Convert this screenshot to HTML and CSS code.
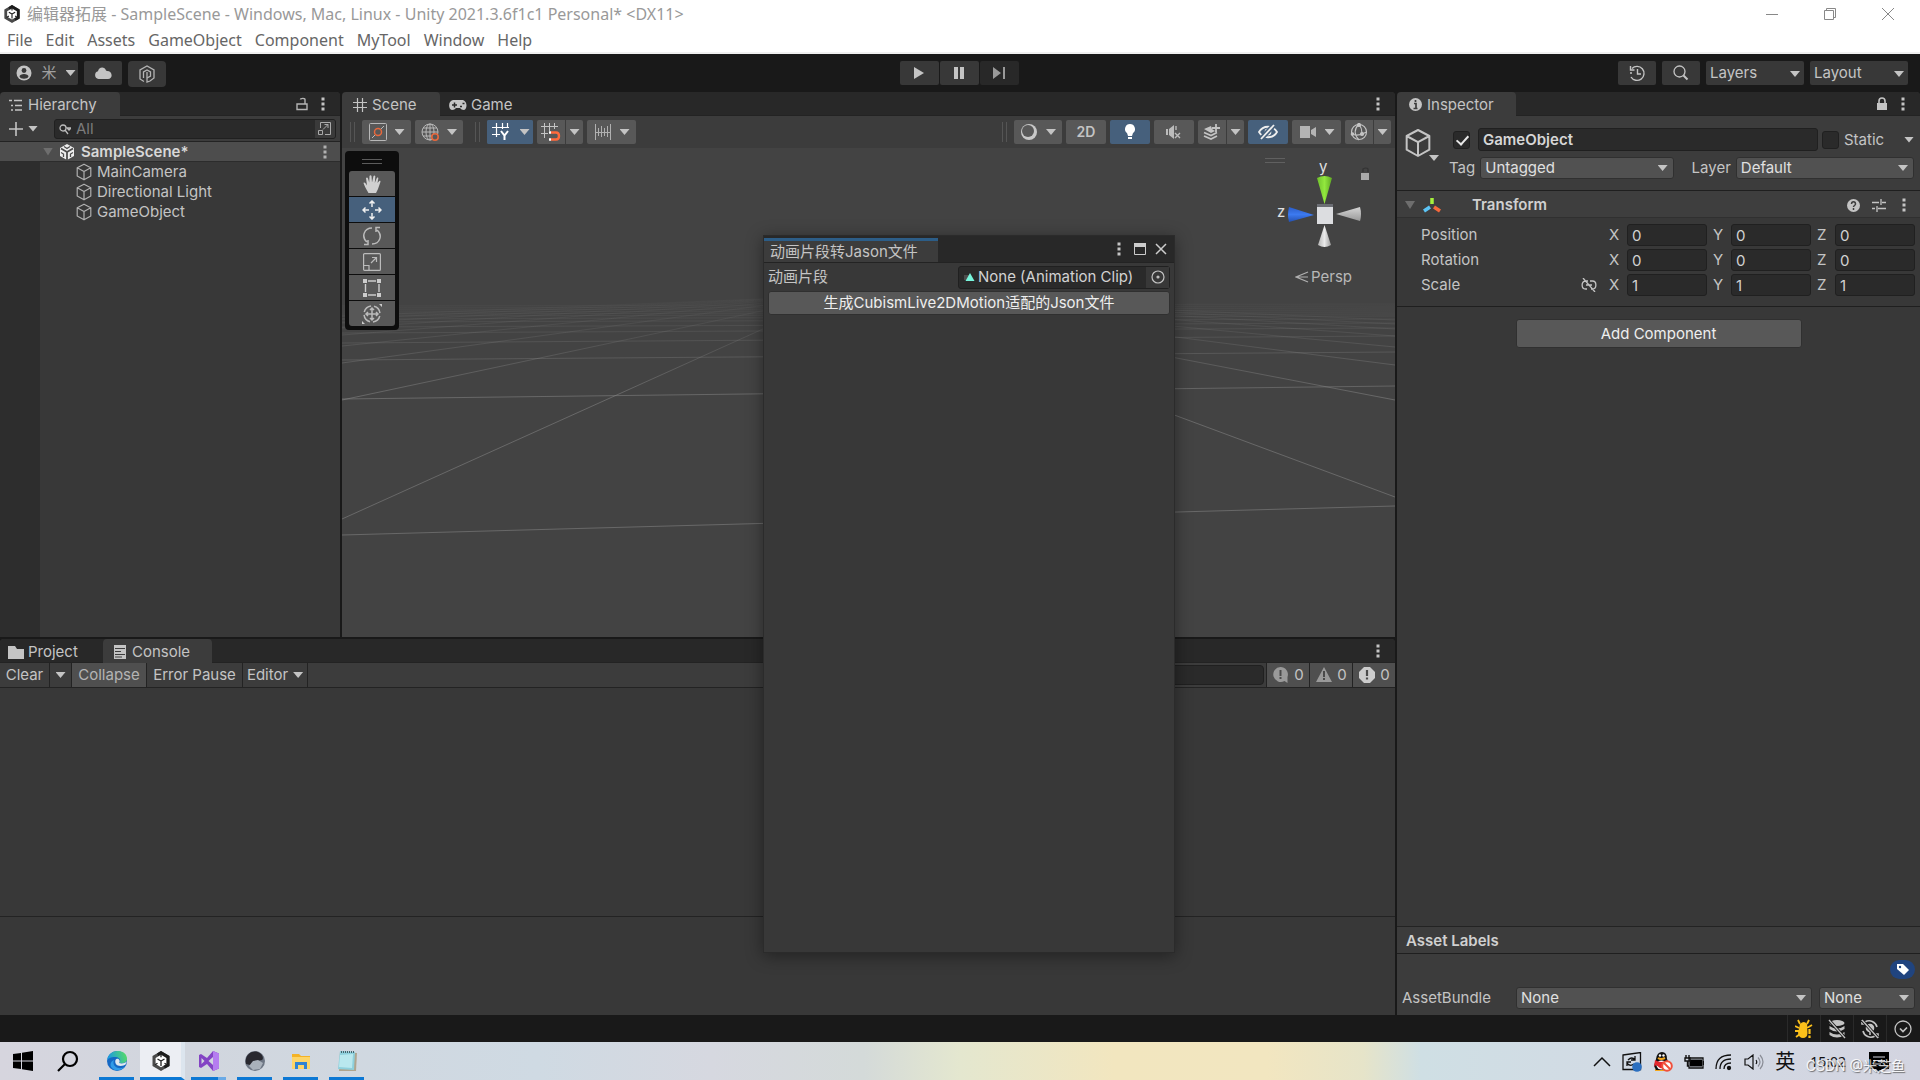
FILE: index.html
```html
<!DOCTYPE html>
<html lang="en">
<head>
<meta charset="utf-8">
<title>SampleScene - Unity</title>
<link rel="stylesheet" href="styles.css">
</head>
<body>
<svg class="defs" width="0" height="0" aria-hidden="true">
  <symbol id="cube" viewBox="0 0 18 18"><path d="M9 1.2 15.8 4.800V13L9 16.800 2.200 13V4.800ZM2.200 4.800 9 8.500 15.800 4.800M9 8.500V16.800" fill="none" stroke="currentColor" stroke-width="1.200" stroke-linejoin="round"/></symbol>
  <symbol id="kebab" viewBox="0 0 4 14"><path d="M.5.5h3v3h-3zM.5 5.500h3v3h-3zM.5 10.500h3v3h-3z" fill="currentColor"/></symbol>
  <symbol id="unity" viewBox="0 0 20 20"><path d="M10 0 18.500 5V15L10 20 1.500 15V5Z" fill="#4a4a4a"/><path d="M10 0 18.500 5V15L14 17.500 6 2.500Z" fill="#1c1c1c"/><path d="M10 3.800 15.400 6.900v6.200L10 16.200 4.600 13.100V6.900Z" fill="#fff"/><path d="M10 10V15M10 10 6.500 8M10 10 13.500 8" stroke="#222" stroke-width="1.300"/><path d="M10 3v3.200M4 13.800l2.500-1.500M16 13.800l-2.500-1.500" stroke="#222" stroke-width="1.300"/></symbol>
  <symbol id="magnifier" viewBox="0 0 18 18"><circle cx="7.500" cy="7.500" r="5.500" fill="none" stroke="currentColor" stroke-width="1.300"/><path d="m11.500 11.500 4 4" stroke="currentColor" stroke-width="2"/></symbol>
</svg>

<header class="titlebar">
  <svg class="app-icon" width="18" height="20"><use href="#unity"/></svg>
  <h1>编辑器拓展 - SampleScene - Windows, Mac, Linux - Unity 2021.3.6f1c1 Personal* &lt;DX11&gt;</h1>
  <div class="win-controls">
    <button aria-label="Minimize"><svg width="14" height="14"><path d="M1 7.500h12" stroke="#888"/></svg></button>
    <button aria-label="Restore"><svg width="14" height="14"><path d="M1.500 3.500h9v9h-9zM3.500 3.500v-2h9v9h-2" fill="none" stroke="#888"/></svg></button>
    <button aria-label="Close window"><svg width="14" height="14"><path d="m1 1 12 12M13 1 1 13" stroke="#888"/></svg></button>
  </div>
</header>
<nav class="menubar">
  <a href="#">File</a><a href="#">Edit</a><a href="#">Assets</a><a href="#">GameObject</a><a href="#">Component</a><a href="#">MyTool</a><a href="#">Window</a><a href="#">Help</a>
</nav>

<div class="toolbar">
  <div class="group left">
    <button class="tb account" aria-label="Account"><svg width="16" height="16"><circle cx="8" cy="8" r="7.500" fill="#c4c4c4"/><circle cx="8" cy="5.500" r="2.400" fill="#383838"/><path d="M3.500 11.500c0-3.500 9-3.500 9 0-1 3-8 3-9 0Z" fill="#383838"/></svg><span>米</span><i class="tri"></i></button>
    <button class="tb cloud" aria-label="Cloud"><svg width="18" height="14"><path d="M4.500 13a4 4 0 0 1-.5-7.800C4.500.5 11 0 12 4.500l1 .5c6 0 6 8 1 8Z" fill="#c4c4c4"/></svg></button>
    <button class="tb plastic" aria-label="Version control"><svg width="18" height="18" fill="none" stroke="#b4b4b4" stroke-width="1.300"><path d="M6 16.500 2 14V5L9 1l7 4v8l-4 3-3 1V7"/><path d="M5.500 13V7L9 5l3.500 2v4L9 13"/></svg></button>
  </div>
  <div class="group play">
    <button class="tb" aria-label="Play"><svg width="14" height="14"><path d="M2 1v12l10-6Z" fill="#c4c4c4"/></svg></button>
    <button class="tb" aria-label="Pause"><svg width="14" height="14"><path d="M2 1h4v12H2zM8 1h4v12H8z" fill="#c4c4c4"/></svg></button>
    <button class="tb dim" aria-label="Step"><svg width="14" height="14"><path d="M1 1v12l8-6ZM11 1h2v12h-2z" fill="#999"/></svg></button>
  </div>
  <div class="group right">
    <button class="tb" aria-label="Undo history"><svg width="18" height="18" fill="none" stroke="#c4c4c4" stroke-width="1.400"><path d="M4 4.500A7 7 0 1 1 3 13M2.500 2v4h4M2 9h2M9.500 5v5H13"/></svg></button>
    <button class="tb" aria-label="Search"><svg width="18" height="18" color="#c4c4c4"><use href="#magnifier"/></svg></button>
    <span class="dd dark"><select aria-label="Layers"><option>Layers</option></select></span>
    <span class="dd dark"><select aria-label="Layout"><option>Layout</option></select></span>
  </div>
</div>

<main class="workspace">
  <div class="docks">
    <section class="panel hierarchy">
      <div class="tabs">
        <button class="tab on t-hier"><svg width="14" height="14" stroke="#c4c4c4" stroke-width="1.300"><path d="M0 2.500h3M5 2.500h8M2 7.500h2M6 7.500h7M2 12h2M6 12h7"/></svg>Hierarchy</button>
        <span class="fill"></span>
        <svg width="12" height="14" fill="none" stroke="#b4b4b4" stroke-width="1.400"><path d="M1 7h10v5.500H1zM9 7V2.500C9 1 4.500 1 4.500 2.500"/></svg>
        <svg class="kb" width="4" height="14"><use href="#kebab"/></svg>
      </div>
      <div class="hier-bar">
        <button class="plus" aria-label="Add"><svg width="16" height="16"><path d="M8 1v14M1 8h14" stroke="#c4c4c4" stroke-width="1.600"/></svg><i class="tri"></i></button>
        <label class="searchbox"><svg width="12" height="12" fill="none" stroke="#bbb" stroke-width="1.300"><circle cx="4" cy="5" r="3"/><path d="m6 7 3 4M8 5h4l-2 2Z"/></svg><input type="text" placeholder="All" aria-label="Search hierarchy"><svg class="pick" width="15" height="15" fill="none" stroke="#aaa"><path d="M3.500 7V1.500h10v12H8M1.500 9.500h4v4h-4zM6 8.500l5-5M7.500 3.500H11V7"/></svg></label>
      </div>
      <ul class="tree">
        <li class="scene-row"><i class="tri grey"></i><svg width="16" height="18"><path d="M8 1 15 5v8l-7 4-7-4V5Z" fill="#eee"/><path d="M8 9v8M8 9 2 5.500M8 9l6-3.500" stroke="#4d4d4d" stroke-width="1.800"/><path d="M5 3.500 8 5.500l3-2M2 9.500l2.500 1.500v3M14 9.500 11.500 11v3" stroke="#4d4d4d" stroke-width="1.300" fill="none"/></svg><b>SampleScene*</b><svg class="kb" width="4" height="14"><use href="#kebab"/></svg></li>
        <li><svg width="18" height="18"><use href="#cube"/></svg>MainCamera</li>
        <li><svg width="18" height="18"><use href="#cube"/></svg>Directional Light</li>
        <li><svg width="18" height="18"><use href="#cube"/></svg>GameObject</li>
      </ul>
    </section>

    <section class="panel scene">
      <div class="tabs">
        <button class="tab on t-scene"><svg width="14" height="14" stroke="#c4c4c4" stroke-width="1.200"><path d="M4.500 0v14M9.500 0v14M0 4.500h14M0 9.500h14"/></svg>Scene</button>
        <button class="tab t-game"><svg width="18" height="12"><path d="M4 1h10c5 2 4 9 1 10-2 0-3-1-4-2H7c-1 1-2 2-4 2C-1 10-1 2 4 1Z" fill="#c4c4c4"/><path d="M3 6h5M5.500 3.500v5M11 7.500h2M13.500 4.500h2" stroke="#282828" stroke-width="1.500"/></svg>Game</button>
        <span class="fill"></span>
        <svg class="kb" width="4" height="14"><use href="#kebab"/></svg>
      </div>
      <div class="scene-bar">
        <i class="grip"></i>
        <button class="sb w50" aria-label="Pivot"><svg width="18" height="18" fill="none" stroke="#b8b8b8"><rect x=".5" y=".5" width="17" height="17" rx="1"/><path d="m3 15 3-3M12 6l3-3"/><circle cx="9" cy="9" r="3.500" stroke="#e8683c" stroke-width="1.500"/></svg><i class="tri"></i></button>
        <button class="sb w48" aria-label="Handle rotation"><svg width="18" height="18" fill="none" stroke="#b8b8b8"><circle cx="9" cy="9" r="8"/><ellipse cx="9" cy="9" rx="4" ry="8"/><path d="M9 1v16M1 9h16M2 5h14M2 13h10"/><circle cx="14" cy="14" r="3.200" fill="#585858" stroke="#e8683c" stroke-width="1.600"/></svg><i class="tri"></i></button>
        <i class="grip second"></i>
        <div class="split blue"><button aria-label="Grid"><svg width="18" height="18" fill="none" stroke="#fff" stroke-width="1.200"><path d="M4.500 0v14M10.500 0v6M15.500 0v5M0 4.500h17M0 11.500h8"/><path d="m9 8 3.500 4.500L16 8M12.500 12v5" stroke-width="2"/></svg></button><button aria-label="Grid options"><i class="tri"></i></button></div>
        <div class="split"><button aria-label="Snap"><svg width="20" height="20" fill="none" stroke="#c4c4c4"><path d="M3.500 1v15M8.500 1v8M13.500 1v6M0 4.500h17M0 11.500h7"/><path d="M10 10.500h5c4 0 4 7 0 7h-5" stroke="#ff6a3c" stroke-width="2.400"/><path d="M8 10.500h2M8 17.500h2" stroke="#fff" stroke-width="2.400"/></svg></button><button aria-label="Snap options"><i class="tri"></i></button></div>
        <button class="sb w50" aria-label="Snap increment"><svg width="18" height="18" stroke="#b0b0b0"><path d="M1.500 1v16M16.500 1v16M4.500 5v8M7.500 3v11M10.500 5v8M13.500 3v11M1 9.500h16"/></svg><i class="tri"></i></button>
        <span class="fill"></span>
        <i class="grip"></i>
        <button class="sb w48" aria-label="Shading"><svg width="18" height="18"><circle cx="9" cy="9" r="8" fill="#c8c8c8"/><circle cx="8" cy="8" r="6" fill="#585858"/></svg><i class="tri"></i></button>
        <button class="sb w40 two-d">2D</button>
        <button class="sb w40 blue" aria-label="Lighting"><svg width="14" height="18"><path d="M7 1a5 5 0 0 0-3 9l1 3h4l1-3A5 5 0 0 0 7 1ZM5 14h4v2H5z" fill="#fff"/></svg></button>
        <button class="sb w40" aria-label="Audio"><svg width="18" height="16"><path d="M1 5h2v6H1zM4 5l5-4v14l-5-4Z" fill="#bbb"/><path d="m10 9 5 5M15 9l-5 5M11 2v4" stroke="#bbb" stroke-width="1.400"/></svg></button>
        <div class="split"><button aria-label="Effects"><svg width="18" height="18"><path d="m1 6 7-3 1 3 3 2-4 2Z" fill="#c4c4c4"/><path d="m1 9.500 7 3 6-3M1 13l7 3 6-3" stroke="#c4c4c4" stroke-width="1.800" fill="none"/><path d="M13 1v8M9 5h8" stroke="#c4c4c4" stroke-width="1.800"/></svg></button><button aria-label="Effects options"><i class="tri"></i></button></div>
        <button class="sb w40 blue" aria-label="Scene visibility"><svg width="20" height="16" fill="none" stroke="#eee" stroke-width="1.800"><path d="M1 8c4-7 14-7 18 0-4 7-14 7-18 0Z"/><circle cx="10" cy="8" r="2.500"/><path d="M3 15 16 1" stroke="#46607c" stroke-width="5"/><path d="M3 15 16 1"/></svg></button>
        <button class="sb w50" aria-label="Scene camera"><svg width="18" height="14"><path d="M1 1h10v12H1zM12 5l5-3v10l-5-3Z" fill="#b4b4b4"/></svg><i class="tri"></i></button>
        <div class="split"><button aria-label="Gizmos"><svg width="18" height="18" fill="none" stroke="#c4c4c4" stroke-width="1.200"><circle cx="9" cy="9" r="7.500"/><path d="M9 1c-5 5-5 11 0 16M9 1c2 3 3 6 3 9M1.500 11c5 2 10 1 15-2"/><circle cx="9" cy="2" r="1.500" fill="#c4c4c4"/><circle cx="12" cy="11" r="1.500" fill="#c4c4c4"/><circle cx="2.500" cy="11" r="1.200" fill="#c4c4c4"/></svg></button><button aria-label="Gizmo options"><i class="tri"></i></button></div>
      </div>
      <div class="viewport">
        <svg class="floor" viewBox="0 0 1053 489" preserveAspectRatio="none">
          <defs><linearGradient id="fade" gradientUnits="userSpaceOnUse" x1="0" y1="150" x2="0" y2="250"><stop offset="0" stop-color="#8c8c8c" stop-opacity=".04"/><stop offset=".4" stop-color="#8c8c8c" stop-opacity=".2"/><stop offset="1" stop-color="#8c8c8c" stop-opacity=".5"/></linearGradient></defs>
          <g stroke="url(#fade)" fill="none">
            <path d="M0 387 1053 358M0 251 1053 238M0 212 1053 204M0 195 1053 188M0 185 1053 180M0 179 1053 175M0 174 1053 171M0 171 1053 168M0 168 1053 166M0 166 1053 164M0 164 1053 162M0 162 1053 160M0 160 1053 158M0 158 1053 156"/>
            <path d="M0 371 494 148M0 252 490 148M0 215 490 148M0 198 490 148M0 187 490 148M0 180 490 148M0 175 490 148M0 171 490 148M0 168 490 148"/>
            <path d="M1053 349 512 148M1053 252 512 148M1053 217 512 148M1053 199 512 148M1053 188 512 148M1053 181 512 148M1053 176 512 148M1053 172 512 148"/>
          </g>
        </svg>
        <div class="tools">
          <i class="grip-h"></i>
          <button aria-label="View tool"><svg width="18" height="20"><path d="M5.500 19C3 15 1 11 .5 9c1-1 2 0 3.500 2.500L3 4c1-1 1.500-.5 2 .5l1.200 4L6.500 2c.5-1.200 1.700-1 2 0l.5 6.500L10.500 2c.5-1 1.700-.7 1.800.3L11.800 9l2-5c.7-1 1.700-.4 1.500.6L14.500 9l1.700-2c1-.5 1.500.2 1.200 1L15 15l-2 4Z" fill="#d0d0d0"/></svg></button>
          <button class="blue" aria-label="Move tool"><svg width="20" height="20" fill="none" stroke="#eee" stroke-width="1.500"><path d="M10 1v6M10 13v6M1 10h6M13 10h6M7.500 3.500 10 1l2.500 2.500M7.500 16.500 10 19l2.500-2.500M3.500 7.500 1 10l2.500 2.500M16.500 7.500 19 10l-2.500 2.500"/></svg></button>
          <button aria-label="Rotate tool"><svg width="20" height="20" fill="none" stroke="#bbb" stroke-width="1.500"><path d="M10 2c-8 0-11 9-5 14M10 18c8 0 11-9 5-14M2 18.500h4V14M18 1.500h-4V6"/></svg></button>
          <button aria-label="Scale tool"><svg width="18" height="18" fill="none" stroke="#bbb" stroke-width="1.200"><rect x=".6" y=".6" width="16.800" height="16.800" rx="1"/><path d="M1 12.500h5v5M8 10l5-5M9 4.500h4.500V9"/></svg></button>
          <button aria-label="Rect tool"><svg width="18" height="18"><path d="M0 0h4v4H0zM14 0h4v4h-4zM0 14h4v4H0zM14 14h4v4h-4z" fill="#ccc"/><path d="M5 2h8M5 16h8M2.500 5v8M16 5v8" stroke="#ccc" stroke-width="1.400"/></svg></button>
          <button aria-label="Transform tool"><svg width="20" height="20" fill="none" stroke="#bbb" stroke-width="1.500"><circle cx="10" cy="10" r="8" stroke-dasharray="9.500 3" stroke-dashoffset="-2"/><path d="M10 4v12M4 10h12M8 6l2-2 2 2M8 14l2 2 2-2M6 8l-2 2 2 2M14 8l2 2-2 2"/><path d="M17 0h3v3ZM0 17v3h3Z" fill="#ccc" stroke="none"/></svg></button>
        </div>
        <svg class="gizmo" width="130" height="140">
          <defs><linearGradient id="gy"><stop stop-color="#6fc02c"/><stop offset=".5" stop-color="#92e83e"/><stop offset="1" stop-color="#5fa823"/></linearGradient><linearGradient id="gw"><stop stop-color="#b5b5b5"/><stop offset=".5" stop-color="#eaeaea"/><stop offset="1" stop-color="#9c9c9c"/></linearGradient><linearGradient id="gb" x2="0" y2="1"><stop stop-color="#2a5cc8"/><stop offset=".5" stop-color="#3c7af0"/><stop offset="1" stop-color="#2450b0"/></linearGradient><linearGradient id="gv" x2="0" y2="1"><stop stop-color="#d5d5d5"/><stop offset="1" stop-color="#999"/></linearGradient></defs>
          <path d="M2 8.500h20M2 12.500h20" stroke="#606060"/>
          <text x="56" y="22">y</text><text x="14" y="67">z</text>
          <path d="M54 28q7.500-4 15 0l-7.500 26Z" fill="url(#gy)"/>
          <path d="M26 57q-2 8 0 15l25-7Z" fill="url(#gb)"/>
          <path d="M97 57q2 7 0 14l-24-7Z" fill="url(#gv)"/>
          <path d="M55 95q6.500 4 13 0L61.500 75Z" fill="url(#gw)"/>
          <path d="M54 54h16v3H54z" fill="#6c6e74"/><path d="M54 57h16v17H54z" fill="#dcdde0"/>
          <path d="M98 23h8v7h-8z" fill="#aaa"/><path d="M100 22v-3q3-2 5 0v3" fill="none" stroke="#333" stroke-width="1.200"/>
        </svg>
        <button class="persp"><svg width="14" height="12" stroke="#b0b0b0" stroke-width="1.200"><path d="M13 1 1 6l12 5M1 6h12" fill="none"/></svg>Persp</button>
      </div>
    </section>

    <section class="panel console">
      <div class="tabs">
        <button class="tab t-project"><svg width="16" height="14"><path d="M0 1h7l2 3h7v10H0Z" fill="#c4c4c4"/></svg>Project</button>
        <button class="tab on t-console"><svg width="12" height="14"><path d="M0 0h12v14H0z" fill="#c4c4c4"/><path d="M1 3.500h10M1 6.500h6M1 9.500h10M1 12h7" stroke="#3c3c3c" stroke-width="1.200"/></svg>Console</button>
        <span class="fill"></span>
        <svg class="kb" width="4" height="14"><use href="#kebab"/></svg>
      </div>
      <div class="con-bar">
        <button class="clear">Clear</button><button class="clear-dd" aria-label="Clear options"><i class="tri"></i></button>
        <button class="collapse">Collapse</button>
        <button class="errp">Error Pause</button>
        <button class="editor">Editor<i class="tri"></i></button>
        <span class="fill"></span>
        <input class="con-search" type="text" aria-label="Search console">
        <button class="count"><svg width="18" height="18"><path d="M8.500 1a7.500 7.500 0 1 0 4 14l3 2v-6A7.500 7.500 0 0 0 8.500 1Z" fill="#999"/><path d="M8.500 4v6M8.500 11v2" stroke="#4a4a4a" stroke-width="2"/></svg>0</button>
        <button class="count"><svg width="18" height="18"><path d="M9 1 17 16H1Z" fill="#999"/><path d="M9 5v6M9 12v2" stroke="#4a4a4a" stroke-width="2"/></svg>0</button>
        <button class="count"><svg width="18" height="18"><path d="M6 1h6l5 5v6l-5 5H6l-5-5V6Z" fill="#ccc"/><path d="M9 4v6M9 11.500v2" stroke="#4a4a4a" stroke-width="2.200"/></svg>0</button>
      </div>
      <div class="log"></div>
      <div class="detail"></div>
    </section>
  </div>

  <section class="panel inspector">
    <div class="tabs">
      <button class="tab on t-insp"><svg width="13" height="13"><circle cx="6.500" cy="6.500" r="6.500" fill="#c4c4c4"/><path d="M6.500 2v2M5 5.500h2V10M4.500 10.500h4" stroke="#3c3c3c" stroke-width="1.700" fill="none"/></svg>Inspector</button>
      <span class="fill"></span>
      <svg width="12" height="14"><path d="M1 6h10v7H1z" fill="#c4c4c4"/><path d="M3 7V4q0-3 3-3t3 3v3" fill="none" stroke="#c4c4c4" stroke-width="1.600"/></svg>
      <svg class="kb" width="4" height="14"><use href="#kebab"/></svg>
    </div>
    <div class="obj-head">
      <div class="obj-icon"><svg width="30" height="30"><use href="#cube"/></svg><i class="tri"></i></div>
      <div class="obj-fields">
        <div class="obj-line">
          <input type="checkbox" checked aria-label="Active">
          <input class="name" type="text" value="GameObject" aria-label="Name">
          <label class="static"><input type="checkbox">Static</label><i class="tri"></i>
        </div>
        <div class="obj-line tags">
          <label for="tag">Tag</label><span class="dd tag"><select id="tag"><option>Untagged</option></select></span>
          <label for="layer">Layer</label><span class="dd layer"><select id="layer"><option>Default</option></select></span>
        </div>
      </div>
    </div>
    <div class="comp-head">
      <i class="tri grey"></i>
      <svg width="18" height="18" stroke-width="3.500"><path d="M9 2v6" stroke="#a5f03c"/><path d="M7 11l-6 4" stroke="#5cc4f5"/><path d="m11 11 6 4" stroke="#f5683c"/></svg>
      <h2>Transform</h2><span class="fill"></span>
      <svg width="13" height="13"><circle cx="6.500" cy="6.500" r="6.500" fill="#c4c4c4"/><path d="M4.500 5c0-3 4-3 4 0 0 1.500-2 1.500-2 3M6.500 9v2" fill="none" stroke="#3e3e3e" stroke-width="1.500"/></svg>
      <svg width="14" height="14" stroke="#c4c4c4" stroke-width="1.300"><path d="M0 4.500h7M10 4.500h4M0 10.500h3M6 10.500h8M9 1v6M5 8v6"/></svg>
      <svg class="kb" width="4" height="14"><use href="#kebab"/></svg>
    </div>
    <div class="vectors">
      <div class="vec"><span class="vn">Position</span><label>X<input value="0"></label><label>Y<input value="0"></label><label>Z<input value="0"></label></div>
      <div class="vec"><span class="vn">Rotation</span><label>X<input value="0"></label><label>Y<input value="0"></label><label>Z<input value="0"></label></div>
      <div class="vec"><span class="vn">Scale</span><svg width="16" height="14" fill="none" stroke="#c4c4c4" stroke-width="1.300"><path d="M7 3H4.500C0 3 0 11 4.500 11H6M9 3h2.500c4.500 0 4.500 8 0 8H10M5 7h6M2 0l12 14"/></svg><label>X<input value="1"></label><label>Y<input value="1"></label><label>Z<input value="1"></label></div>
    </div>
    <button class="add">Add Component</button>
    <div class="asset">
      <h2>Asset Labels</h2>
      <button class="pill" aria-label="Labels"><svg width="14" height="14"><path d="M1 1h6l6 6-5 5-7-6Z" fill="#fff"/><circle cx="4" cy="4" r="1.200" fill="#20447f"/></svg></button>
      <div class="bundle"><label for="bundle">AssetBundle</label><span class="dd b1"><select id="bundle"><option>None</option></select></span><span class="dd b2"><select aria-label="Variant"><option>None</option></select></span></div>
    </div>
  </section>
</main>

<footer class="status">
  <button aria-label="Debug"><svg width="18" height="20"><path d="M5 5q4-4 7 0l1 9q-1 5-5 5t-5-5Z" fill="#fbc01a"/><path d="M5 5 3 1M12 5l2-4M4 9 0 7M4 12H0M5 15l-4 3M12 9l5-3" stroke="#fbc01a" stroke-width="1.800"/><path d="M14.500 9v10" stroke="#191919" stroke-width="4"/><path d="M14.500 10v5M14.500 16.500v2.500" stroke="#fbc01a" stroke-width="2.200"/></svg></button>
  <button aria-label="Cache server"><svg width="18" height="20"><ellipse cx="9" cy="4" rx="7.500" ry="3" fill="#c4c4c4"/><path d="M1.500 7q7.500 5 15 0v3q-7.500 5-15 0ZM1.500 13q7.500 5 15 0v3q-7.500 5-15 0Z" fill="#c4c4c4"/><path d="m1 1 16 18" stroke="#191919" stroke-width="3"/><path d="m1 1 16 18" stroke="#c4c4c4" stroke-width="1.300"/></svg></button>
  <button aria-label="Auto lighting"><svg width="18" height="20" fill="none" stroke="#c4c4c4" stroke-width="1.600"><path d="M4 3a8 8 0 0 1 12 5M14 17A8 8 0 0 1 2 12M1 1v4h4M17 19v-4h-4"/><circle cx="9" cy="9" r="3.500" fill="#c4c4c4"/><path d="M9 12v4"/><path d="m1 1 16 18" stroke="#191919" stroke-width="3"/><path d="m1 1 16 18" stroke-width="1.300"/></svg></button>
  <button aria-label="Progress"><svg width="18" height="18" fill="none" stroke="#c4c4c4" stroke-width="1.300"><circle cx="9" cy="9" r="8"/><path d="m6 8.500 3 3 4-4" stroke-width="1.700"/></svg></button>
</footer>

<div class="taskbar">
  <button class="task plain" aria-label="Start"><svg width="20" height="20"><path d="M0 3 8 2v7.500H0ZM9 1.800 20 0v9.500H9ZM0 10.500h8V18l-8-1ZM9 10.500h11V20L9 18.300Z"/></svg></button>
  <button class="task plain" aria-label="Search"><svg width="22" height="22" fill="none" stroke="#000" stroke-width="2.200"><circle cx="13" cy="9" r="7"/><path d="M8 14 1 21"/></svg></button>
  <button class="task app" aria-label="Edge"><svg width="20" height="20"><defs><linearGradient id="eg" x1="0" x2="1" y1=".2"><stop stop-color="#1c9be0"/><stop offset="1" stop-color="#5be05e"/></linearGradient></defs><circle cx="10" cy="10" r="10" fill="#1568c4"/><path d="M0 10C1-3 20-3 20 8c0 4-5 5-8 4 3-3 0-6-4-6-4 0-7 1-8 4Z" fill="url(#eg)"/><path d="M7 9c-2 5 2 9 8 8 2-.5 3-1.500 3.500-2.500C15 20 8 21 5 17c-3-3-1-7 2-8Z" fill="#2f9be8"/><path d="M8.500 9c-1 3 1 6 5 6 2.500 0 4-1 5-1.500L20 10c-1 2-5 3-8 2 1-1 1-3-.5-4-1-.5-2.500 0-3 1Z" fill="#dfe9ef"/></svg></button>
  <button class="task app active" aria-label="Unity"><svg width="20" height="20"><use href="#unity"/></svg></button>
  <button class="task app vs" aria-label="Visual Studio"><svg width="20" height="20"><path d="M14 0 20 2.500v15L14 20 8 13l-6 4-2-1V4l2-1 6 4ZM14 6 9.500 10 14 14ZM2.500 7v6L5.500 10Z" fill="#8344c4" fill-rule="evenodd"/><path d="M14 0 20 2.500v15L14 20Z" fill="#b57cf0"/></svg></button>
  <button class="task app" aria-label="Chat"><svg width="20" height="20"><circle cx="10" cy="10" r="10" fill="#6d7684"/><path d="M1 13C-1 3 8-1 13 1c5 2 6 7 4 8l-5 1-2 5-5-1Z" fill="#28282f"/><path d="m8 10 5-1 5 3-3 6-7 1-4-4Z" fill="#a9b1bb"/></svg></button>
  <button class="task app" aria-label="File Explorer"><svg width="20" height="20"><path d="M1 3h7l2 2h9v13H1Z" fill="#f5b325"/><path d="M1 6h18v12H1z" fill="#fdd568"/><path d="M4 18v-7h12v7h-3v-4H7v4Z" fill="#2f83d3"/></svg></button>
  <button class="task app" aria-label="Notepad"><svg width="20" height="22"><path d="m3 2 17 1-1 18H2Z" fill="#b0a58e"/><path d="m3 1 15 1-1 18-16-1Z" fill="#8ed0dc"/><path d="m3 5 13-1-1 14-13-1Z" fill="#b9e8ee"/><path d="M4 2h14" stroke="#46656e" stroke-width="2" stroke-dasharray="1 1"/></svg></button>
  <span class="fill"></span>
  <div class="tray">
    <svg width="18" height="12" fill="none" stroke="#111" stroke-width="1.500"><path d="m1 10 8-8 8 8"/></svg>
    <svg width="20" height="20"><path d="M1 3 18.500.5v17L1 17.500Z" fill="none" stroke="#111" stroke-width="1.300"/><path d="M6 8q4-4 7 0M13 4v4H9M5 14v-4h4M5 11q3 4 7 1" fill="none" stroke="#111" stroke-width="1.300"/><circle cx="15" cy="15" r="4.800" fill="#2b6fc0"/></svg>
    <svg width="20" height="20"><path d="M2 19h12v-2L2 17Z" fill="#f4a81d"/><path d="M3 7q1-7 6-7t5 7l3 6-2 5H3l-2-4Z" fill="#111"/><ellipse cx="8.500" cy="13" rx="5" ry="4.500" fill="#fff"/><path d="M2 8q6 4 13 0v3l2 4-4 2-6-1-4-3-2 2Z" fill="#e5282e"/><path d="M5 6q3 2 7 0" stroke="#f4a81d" stroke-width="2"/><circle cx="7" cy="3.500" r="1.200" fill="#fff"/><circle cx="10.500" cy="3.500" r="1.200" fill="#fff"/><circle cx="14" cy="14" r="4.800" fill="#fff" stroke="#f0503c" stroke-width="2"/><path d="m11 11 6 6" stroke="#f0503c" stroke-width="2"/></svg>
    <svg width="20" height="14"><path d="M5 3h14v10H5z" fill="none" stroke="#111" stroke-width="1.300"/><path d="M6 4.500h12v7H6z"/><path d="M19.500 6v4M2 0v3M5 0v3M1 3h5v3H1zM3.500 6v5H5" stroke="#111" fill="none" stroke-width="1.400"/></svg>
    <svg width="18" height="18" fill="none" stroke="#111" stroke-width="1.300"><path d="M1 16Q1 2 16 2M5 16Q5 6 16 6M9 16q0-6 7-6"/><circle cx="14" cy="15" r="1.500" fill="#111"/></svg>
    <svg width="20" height="16" fill="none" stroke="#111" stroke-width="1.200"><path d="M1 5h3l5-4v14l-5-4H1ZM12 6q1.500 2 0 4"/><path d="M14 3.500q4 4.500 0 9M16 1q6 7 0 14" stroke="#8a8d96"/></svg>
    <span class="ime">英</span>
    <time>15:02</time>
    <svg class="note" width="20" height="20"><path d="M0 0h20v17h-7l-3 3-3-3H0Z"/><path d="M4 5h12M4 8.500h12M4 12h8" stroke="#d4d6e0"/></svg>
    <span class="watermark">CSDN @米芝鱼</span>
  </div>
</div>

<section class="dialog">
  <div class="dlg-head">
    <h2>动画片段转Jason文件</h2><span class="fill"></span>
    <button aria-label="Options"><svg width="4" height="14"><use href="#kebab"/></svg></button>
    <button aria-label="Maximize"><svg width="12" height="12"><path d="M.5.5h11v11H.5z" fill="none" stroke="#ccc"/><path d="M0 0h12v4H0z" fill="#ccc"/></svg></button>
    <button aria-label="Close"><svg width="12" height="12"><path d="m1 1 10 10M11 1 1 11" stroke="#ccc" stroke-width="1.500"/></svg></button>
  </div>
  <div class="dlg-row"><span id="clip-label">动画片段</span><button class="objfield" aria-labelledby="clip-label"><svg width="11" height="10"><path d="M0 3h5v5H0z" fill="#4c4c4c"/><path d="M6 1 10.500 9h-9Z" fill="#78f5dc"/></svg><span>None (Animation Clip)</span><span class="pickbox"><svg width="14" height="14" fill="none" stroke="#c4c4c4" stroke-width="1.200"><circle cx="7" cy="7" r="6"/><circle cx="7" cy="7" r="1" fill="#c4c4c4"/></svg></span></button></div>
  <button class="gen">生成CubismLive2DMotion适配的Json文件</button>
</section>
</body>
</html>
```
FILE: styles.css
```css
* { box-sizing: border-box; }
body {
  margin: 0;
  height: 100vh;
  display: flex;
  flex-direction: column;
  overflow: hidden;
  position: relative;
  background: #191919;
  color: #c4c4c4;
  font: 15px/20px Inter, "Noto Sans CJK SC", sans-serif;
}
button, input, select { font: inherit; color: inherit; margin: 0; padding: 0; border: 0; background: none; border-radius: 0; }
button { display: flex; align-items: center; justify-content: center; white-space: nowrap; }
h1, h2 { margin: 0; font: inherit; }
svg { flex: none; display: block; }
.defs { position: absolute; }
.fill { flex: 1; }
.tri { flex: none; width: 10px; height: 6px; background: #c4c4c4; clip-path: polygon(0 0, 100% 0, 50% 100%); }
.tri.grey { height: 8px; background: #6e6e6e; }

/* window chrome */
.titlebar, .menubar { background: #fff; display: flex; align-items: center; font-family: "Noto Sans", "Noto Sans CJK SC", sans-serif; font-size: 16px; }
.titlebar { height: 28px; padding: 0 3px; gap: 6px; color: #999; }
.titlebar h1 { flex: 1; white-space: nowrap; }
.win-controls { display: flex; }
.win-controls button { width: 58px; height: 28px; }
.menubar { height: 26px; padding-left: 7px; gap: 13px; border-bottom: 2px solid #f0f0f0; }
.menubar a { color: #666; text-decoration: none; }

/* main toolbar */
.toolbar { height: 38px; padding: 7px 12px 7px 10px; display: grid; grid-template-columns: 1fr auto 1fr; }
.group { display: flex; }
.group.left { gap: 6px; }
.group.play { gap: 1px; }
.group.right { gap: 6px; justify-content: flex-end; }
.tb { width: 38px; height: 24px; background: #383838; border-radius: 2px; }
.play .tb { width: 39px; }
.tb.dim { background: #282828; }
.tb.account { width: 68px; gap: 9px; padding-left: 4px; }
.tb.account span { color: #a0a0a0; }
.tb.plastic { height: 26px; border-radius: 4px; }

.dd { position: relative; display: flex; }
.dd::after { content: ""; position: absolute; right: 6px; top: 50%; margin-top: -3px; width: 10px; height: 6px; background: #c4c4c4; clip-path: polygon(0 0, 100% 0, 50% 100%); pointer-events: none; }
.dd select { appearance: none; flex: 1; min-width: 0; height: 22px; padding: 0 4px; background: #515151; border: 1px solid #303030; border-radius: 3px; color: #e0e0e0; }
.dd.dark { width: 98px; }
.dd.dark::after { right: 4px; }
.dd.dark select { height: 24px; background: #383838; border: 0; border-radius: 2px; color: #c4c4c4; }

/* docking areas */
.workspace { flex: 1; min-height: 0; display: grid; grid-template-columns: minmax(0, 1fr) 523px; gap: 2px; }
.docks { min-height: 0; display: grid; grid-template: minmax(0, 1fr) 376px / 340px minmax(0, 1fr); gap: 2px; }
.panel { background: #383838; display: flex; flex-direction: column; min-width: 0; min-height: 0; border-radius: 4px 4px 0 0; overflow: hidden; }
.console { grid-column: 1 / -1; }
.tabs { flex: none; height: 24px; background: #282828; display: flex; align-items: center; padding-right: 15px; gap: 13px; border-bottom: 1px solid #232323; }
.tabs .fill { margin-left: -13px; }
.tab { height: 24px; gap: 6px; justify-content: flex-start; margin-right: -13px; border-radius: 4px 4px 0 0; padding-top: 2px; }
.tab.on { background: #3c3c3c; }
.t-hier { width: 120px; padding-left: 9px; gap: 5px; }
.t-scene { width: 98px; padding-left: 11px; gap: 5px; }
.t-game { width: 110px; padding-left: 9px; gap: 4px; }
.t-project { width: 103px; padding-left: 8px; gap: 4px; }
.t-console { width: 109px; padding-left: 11px; }
.t-insp { width: 119px; padding-left: 12px; gap: 5px; }

/* hierarchy */
.hier-bar { flex: none; height: 26px; background: #3c3c3c; display: flex; align-items: center; padding: 0 4px 0 8px; gap: 10px; border-bottom: 1px solid #232323; }
.plus { gap: 4px; }
.plus + .searchbox { margin-left: 6px; }
.searchbox { flex: 1; height: 20px; display: flex; align-items: center; gap: 5px; padding-left: 4px; background: #2a2a2a; border: 1px solid #202020; border-radius: 3px; overflow: hidden; }
.searchbox input { flex: 1; min-width: 0; outline: 0; }
.searchbox input::placeholder { color: #7c7c7c; opacity: 1; }
.searchbox .pick { width: 20px; height: 20px; padding: 2px; background: #3a3a3a; }
.tree { flex: 1; margin: 0; padding: 0; list-style: none; background: linear-gradient(90deg, #2d2d2d 40px, #383838 40px); }
.tree li { height: 20px; display: flex; align-items: center; gap: 4px; padding-left: 75px; white-space: nowrap; }
.tree li svg { color: #b0b0b0; }
.tree .scene-row { background: #4d4d4d; padding: 0 13px 0 43px; gap: 6px; border-bottom: 1px solid #2c2c2c; color: #d8d8d8; }
.scene-row b { flex: 1; font-weight: 600; }

/* scene */
.scene-bar { flex: none; height: 32px; background: #3c3c3c; display: flex; align-items: center; gap: 4px; padding: 0 4px 0 8px; }
.grip { width: 5px; height: 20px; border: solid #555; border-width: 0 1px; margin-right: 3px; }
.grip.second { margin: 0 3px 0 8px; }
.sb, .split button { height: 24px; background: #585858; }
.sb { border-radius: 2px; gap: 8px; }
.w40 { width: 40px; }
.w48 { width: 48px; }
.w50 { width: 49px; }
.two-d { font-size: 14px; font-weight: 600; }
.split { display: flex; gap: 1px; border-radius: 2px; overflow: hidden; }
.split button:first-child { width: 28px; }
.split button:last-child { width: 17px; }
.blue, .split.blue button { background: #46607c; }
.tri + .tri { margin: 0; }
.viewport { flex: 1; min-height: 0; position: relative; background: #434343; }
.floor { position: absolute; inset: 0; width: 100%; height: 100%; }
.tools { position: absolute; left: 3px; top: 3px; width: 54px; padding: 8px 4px 4px; background: #0d0d0d; border-radius: 4px; display: flex; flex-direction: column; gap: 1px; }
.grip-h { align-self: center; width: 20px; height: 5px; margin-bottom: 6px; border: solid #5c5c5c; border-width: 1px 0; }
.tools button { height: 25px; background: #585858; }
.tools button.blue { background: #46607c; }
.tools button:nth-child(2) { border-radius: 3px 3px 0 0; }
.tools button:last-child { border-radius: 0 0 3px 3px; }
.gizmo { position: absolute; right: 2px; top: 2px; fill: #e0e0e0; font: 15px Inter, sans-serif; }
.persp { position: absolute; right: 43px; top: 119px; gap: 2px; color: #b8b8b8; }

/* console */
.con-bar { flex: none; height: 25px; background: #3c3c3c; display: flex; align-items: stretch; border-bottom: 1px solid #232323; }
.con-bar button { border-right: 1px solid #232323; }
.clear { width: 50px; }
.clear-dd { width: 22px; }
.con-bar .collapse { width: 75px; background: #4f4f4f; color: #b4b4b4; }
.con-bar .errp { width: 96px; }
.editor { width: 65px; gap: 5px; }
.con-search { width: 400px; height: 20px; align-self: center; margin-right: 2px; background: #2a2a2a; border: 1px solid #202020; border-radius: 4px; }
.con-bar .count { width: 43px; gap: 4px; background: #4f4f4f; border-left: 1px solid #232323; border-right: 0; }
.log { flex: 1; border-bottom: 1px solid #232323; }
.detail { height: 98px; }

/* inspector */
.obj-head { flex: none; height: 75px; background: #3c3c3c; display: flex; padding: 12px 6px 0 6px; border-bottom: 1px solid #1f1f1f; }
.obj-icon { width: 50px; display: flex; flex-direction: column; }
.obj-icon .tri { margin-left: 26px; margin-top: -3px; }
.obj-fields { flex: 1; display: flex; flex-direction: column; gap: 6px; }
.obj-line { display: flex; align-items: center; }
input[type="checkbox"] { appearance: none; flex: none; width: 17px; height: 18px; background: #2a2a2a; border: 1px solid #202020; border-radius: 3px; position: relative; }
input[type="checkbox"]:checked::after { content: ""; position: absolute; left: 5px; top: 1px; width: 5px; height: 10px; border: solid #e8e8e8; border-width: 0 2px 2px 0; transform: rotate(42deg); }
.name { flex: 1; min-width: 0; height: 23px; margin: 0 4px 0 8px; padding: 0 4px; font-weight: 600; color: #d6d6d6; background: #2a2a2a; border: 1px solid #202020; border-radius: 3px; }
.static { display: flex; align-items: center; gap: 5px; width: 82px; }
.tags label { margin-right: 5px; margin-left: -4px; }
.tags .tag { flex: 191; margin-right: 22px; }
.tags .layer { flex: 176; }
.comp-head { flex: none; height: 27px; background: #3e3e3e; display: flex; align-items: center; gap: 12px; padding: 2px 14px 0 8px; border-bottom: 1px solid #303030; }
.comp-head .tri + svg { margin-left: -4px; }
.comp-head .kb { margin-left: 4px; }
.comp-head h2, .asset h2 { font-weight: 600; color: #d0d0d0; }
.comp-head h2 { margin-left: 19px; }
.vectors { padding: 6px 5px 10px 24px; display: flex; flex-direction: column; gap: 3px; border-bottom: 1px solid #1f1f1f; }
.vec { height: 22px; display: flex; align-items: center; gap: 6px; }
.vn { flex: 1; }
.vec svg { margin-right: 6px; }
.vec label { width: 98px; display: flex; align-items: center; justify-content: space-between; }
.vec input { width: 80px; height: 22px; padding: 0 4px; background: #2a2a2a; border: 1px solid #202020; border-radius: 3px; color: #d2d2d2; }
.add { flex: none; width: 286px; height: 29px; padding-top: 1px; margin: 12px auto 0; background: #585858; border: 1px solid #303030; border-radius: 3px; color: #eee; }
.asset { margin-top: auto; background: #3c3c3c; border-top: 1px solid #232323; display: flex; flex-direction: column; padding-bottom: 6px; }
.asset h2 { height: 27px; line-height: 28px; padding-left: 9px; border-bottom: 1px solid #1f1f1f; }
.pill { align-self: flex-end; width: 25px; height: 19px; margin: 6px 5px 8px 0; background: #20447f; border-radius: 10px; }
.bundle { display: flex; padding: 0 5px; }
.bundle label { width: 114px; line-height: 22px; }
.b1 { flex: 1; margin-right: 7px; }
.b2 { width: 96px; }

/* status bar */
.status { height: 27px; display: flex; justify-content: flex-end; padding-right: 1px; }
.status button { width: 33px; border-left: 1px solid #2a2a2a; }

/* taskbar */
.taskbar { height: 38px; display: flex; align-items: stretch; padding-right: 13px; background: linear-gradient(90deg, #d6d5de 0, #d1d6de 10%, #cfdae3 28%, #d6d8e0 37%, #d4dad9 45%, #e4e7cf 50%, #f2e6bf 58%, #f2e6c0 66%, #e6e4c9 71%, #cfdfe4 74%, #d2dae4 85%, #d3d4e0); }
.task.plain { width: 45px; }
.task.app { border-bottom: 3px solid #0c78d4; width: 35px; margin: 0 2px 0 9px; padding-top: 3px; }
.task.app.active { width: 45px; margin: 0 0 0 4px; background: #eceef3; border-right: 4px solid #dce5ee; }
.task.app.vs { margin-left: 6px; border-image: linear-gradient(90deg, #0c78d4 72%, #6aaae6 72%) 3; border-style: solid; border-width: 0 0 3px; }
.tray { display: flex; align-items: center; gap: 11px; position: relative; color: #111; padding-top: 1px; }
.ime { font-size: 20px; line-height: 24px; }
.tray time { margin: 0 12px 0 4px; font: 14px/20px "Noto Sans", sans-serif; }
.tray .note { margin-right: 18px; }
.watermark { position: absolute; right: 2px; bottom: 4px; font-size: 14px; color: #fff; opacity: .8; white-space: nowrap; text-shadow: 1px 1px 1px #555; }

/* floating editor window */
.dialog { position: absolute; left: 763px; top: 235px; width: 412px; height: 718px; background: #383838; border: 1px solid #2b2b2b; box-shadow: 0 3px 16px rgba(0, 0, 0, .4); display: flex; flex-direction: column; }
.dlg-head { flex: none; height: 27px; background: #282828; display: flex; align-items: center; gap: 13px; padding-right: 7px; border-bottom: 1px solid #232323; }
.dlg-head h2 { align-self: flex-end; width: 174px; height: 24px; padding-left: 6px; line-height: 22px; background: #3c3c3c; border-top: 3px solid #2c5d87; white-space: nowrap; }
.dlg-head button { height: 24px; }
.dlg-head button:last-child { margin-left: -4px; }
.dlg-row { flex: none; margin: 3px 4px 3px 4px; height: 22px; display: flex; align-items: center; justify-content: space-between; }
.objfield { width: 212px; height: 23px; padding-left: 5px; gap: 3px; justify-content: flex-start; background: #2a2a2a; border: 1px solid #202020; border-radius: 3px; color: #d2d2d2; }
.pickbox { margin-left: auto; width: 23px; height: 21px; background: #383838; display: flex; align-items: center; justify-content: center; }
.gen { flex: none; height: 24px; margin: 0 4px; background: #585858; border: 1px solid #303030; border-radius: 3px; color: #eee; }
```
